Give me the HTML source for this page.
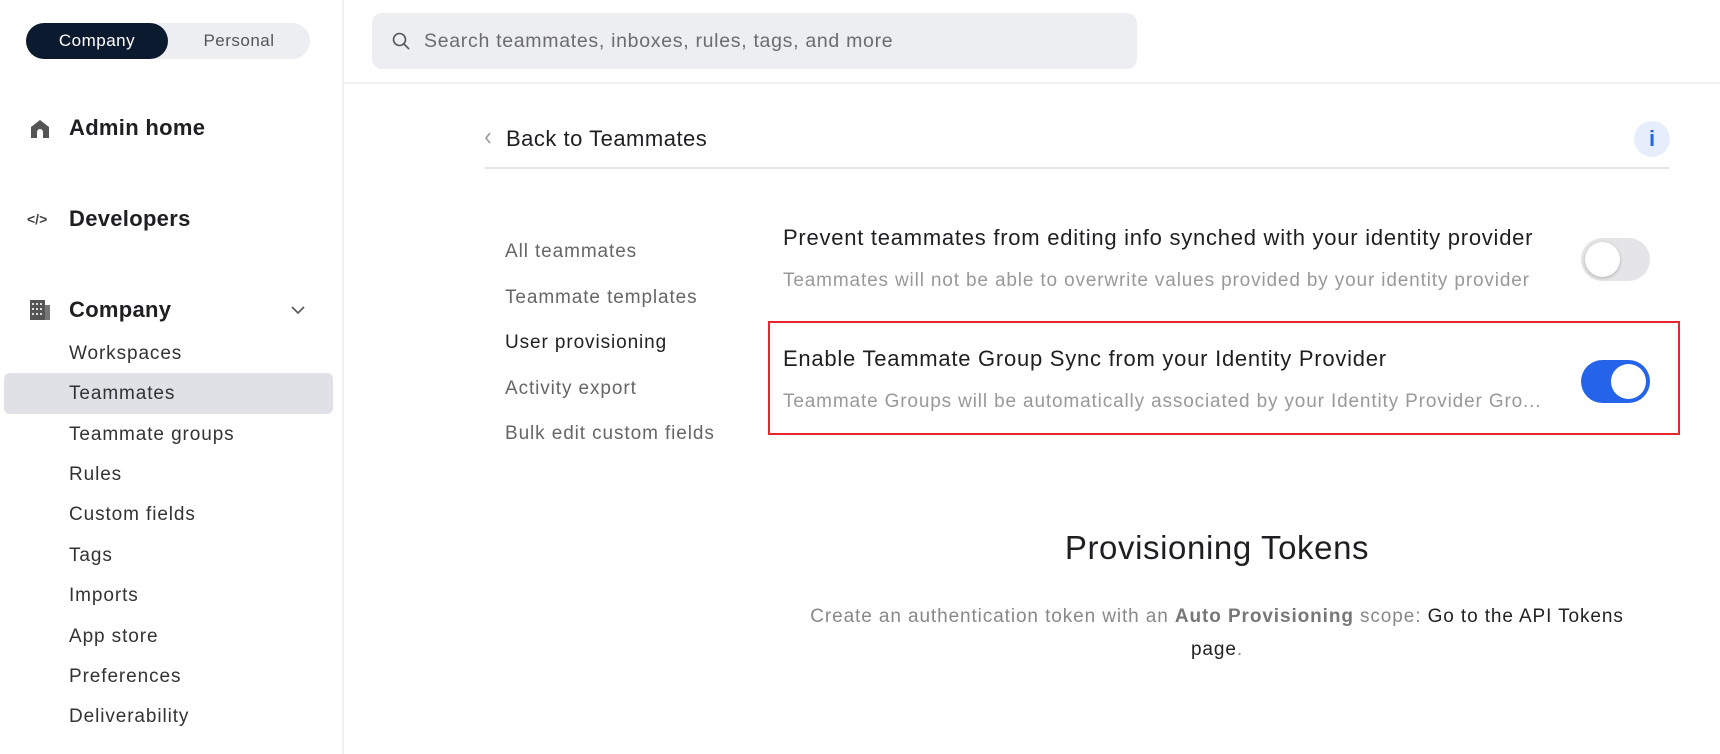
<!DOCTYPE html>
<html><head><meta charset="utf-8"><style>
*{margin:0;padding:0;box-sizing:border-box}
body{width:1720px;height:754px;background:#fff;font-family:"Liberation Sans",Arial,sans-serif;position:relative;overflow:hidden;color:#1f1f23}
.a{position:absolute;white-space:nowrap}
.c{line-height:30px;height:30px;margin-top:-15px}
</style></head><body>
<div class="a" style="left:342px;top:0;width:2px;height:754px;background:#eff0f3"></div>
<div class="a" style="left:344px;top:82px;width:1376px;height:2px;background:#eff0f3"></div>
<!-- switch -->
<div class="a" style="left:26px;top:23px;width:284px;height:36px;border-radius:18px;background:#eceef2"></div>
<div class="a" style="left:26px;top:23px;width:142px;height:36px;border-radius:18px;background:#0c1a30;color:#fff;font-size:17px;text-align:center;line-height:36px;letter-spacing:0.5px">Company</div>
<div class="a" style="left:168px;top:23px;width:142px;height:36px;color:#555;font-size:17px;text-align:center;line-height:36px;letter-spacing:0.5px">Personal</div>
<!-- search -->
<div class="a" style="left:372px;top:13px;width:765px;height:56px;border-radius:10px;background:#eceef2"></div>
<svg class="a" style="left:391px;top:31px" width="20" height="20" viewBox="0 0 20 20"><circle cx="8.5" cy="8.5" r="6" fill="none" stroke="#555" stroke-width="1.6"/><path d="M13 13l5 5" stroke="#555" stroke-width="1.6"/></svg>
<div class="a c" style="left:424px;top:41px;font-size:19.5px;color:#6b6b70;letter-spacing:0.7px">Search teammates, inboxes, rules, tags, and more</div>
<!-- sidebar -->
<svg class="a" style="left:29px;top:118px" width="22" height="22" viewBox="0 0 22 22"><path d="M2 9L11 2l9 7v11h-6v-6a3 3 0 0 0-6 0v6H2z" fill="#555"/></svg>
<div class="a c" style="left:69px;top:128px;font-size:22px;font-weight:bold;letter-spacing:0.3px">Admin home</div>
<div class="a c" style="left:27px;top:219px;font-size:14px;color:#444;font-weight:bold">&lt;/&gt;</div>
<div class="a c" style="left:69px;top:219px;font-size:22px;font-weight:bold;letter-spacing:0.3px">Developers</div>
<svg class="a" style="left:29px;top:299px" width="22" height="22" viewBox="0 0 22 22"><rect x="1" y="1" width="15" height="20" fill="#555"/><rect x="16" y="6" width="5" height="15" fill="#777"/><g fill="#ddd"><rect x="3" y="4" width="2" height="2"/><rect x="7" y="4" width="2" height="2"/><rect x="11" y="4" width="2" height="2"/><rect x="3" y="9" width="2" height="2"/><rect x="7" y="9" width="2" height="2"/><rect x="11" y="9" width="2" height="2"/><rect x="3" y="14" width="2" height="2"/><rect x="7" y="14" width="2" height="2"/><rect x="11" y="14" width="2" height="2"/></g></svg>
<div class="a c" style="left:69px;top:310px;font-size:22px;font-weight:bold;letter-spacing:0.3px">Company</div>
<svg class="a" style="left:290px;top:304px" width="16" height="12" viewBox="0 0 16 12"><path d="M2 3l6 6 6-6" fill="none" stroke="#555" stroke-width="1.6"/></svg>
<div class="a" style="left:4px;top:373px;width:329px;height:41px;border-radius:6px;background:#dfe1e7"></div>
<div style="font-size:19px;color:#333;letter-spacing:0.9px">
<div class="a c" style="left:69px;top:354px">Workspaces</div>
<div class="a c" style="left:69px;top:394px">Teammates</div>
<div class="a c" style="left:69px;top:435px">Teammate groups</div>
<div class="a c" style="left:69px;top:475px">Rules</div>
<div class="a c" style="left:69px;top:515px">Custom fields</div>
<div class="a c" style="left:69px;top:556px">Tags</div>
<div class="a c" style="left:69px;top:596px">Imports</div>
<div class="a c" style="left:69px;top:637px">App store</div>
<div class="a c" style="left:69px;top:677px">Preferences</div>
<div class="a c" style="left:69px;top:717px">Deliverability</div>
</div>
<!-- main -->
<svg class="a" style="left:483px;top:131px" width="10" height="14" viewBox="0 0 10 14"><path d="M7 2L3 7l4 5" fill="none" stroke="#999" stroke-width="1.6"/></svg>
<div class="a c" style="left:506px;top:139px;font-size:22px;letter-spacing:0.5px">Back to Teammates</div>
<div class="a" style="left:1634px;top:121px;width:36px;height:36px;border-radius:50%;background:#e6eefb;color:#2563eb;font-size:22px;text-align:center;line-height:36px;font-weight:bold">i</div>
<div class="a" style="left:485px;top:167px;width:1184px;height:2px;background:#e4e4e7"></div>
<div style="font-size:19px;color:#666;letter-spacing:0.9px">
<div class="a c" style="left:505px;top:252px">All teammates</div>
<div class="a c" style="left:505px;top:298px">Teammate templates</div>
<div class="a c" style="left:505px;top:343px;color:#222">User provisioning</div>
<div class="a c" style="left:505px;top:389px">Activity export</div>
<div class="a c" style="left:505px;top:434px">Bulk edit custom fields</div>
</div>
<div class="a c" style="left:783px;top:238px;font-size:22px;letter-spacing:0.75px">Prevent teammates from editing info synched with your identity provider</div>
<div class="a c" style="left:783px;top:281px;font-size:19px;color:#999;letter-spacing:0.85px">Teammates will not be able to overwrite values provided by your identity provider</div>
<div class="a" style="left:1581px;top:238px;width:69px;height:43px;border-radius:22px;background:#e5e5e7"></div>
<div class="a" style="left:1585px;top:242px;width:35px;height:35px;border-radius:50%;background:#fff;box-shadow:0 1px 3px rgba(0,0,0,.25)"></div>
<div class="a" style="left:768px;top:321px;width:912px;height:114px;border:2px solid #e8262b"></div>
<div class="a c" style="left:783px;top:359px;font-size:22px;letter-spacing:0.75px">Enable Teammate Group Sync from your Identity Provider</div>
<div class="a c" style="left:783px;top:402px;font-size:19px;color:#999;letter-spacing:0.85px">Teammate Groups will be automatically associated by your Identity Provider Gro...</div>
<div class="a" style="left:1581px;top:360px;width:69px;height:43px;border-radius:22px;background:#2563eb"></div>
<div class="a" style="left:1611px;top:364px;width:35px;height:35px;border-radius:50%;background:#fff"></div>
<div class="a" style="left:917px;top:528px;width:600px;text-align:center;font-size:33px;line-height:40px;letter-spacing:0.6px">Provisioning Tokens</div>
<div class="a" style="left:767px;top:600px;width:900px;text-align:center;font-size:19px;line-height:33px;color:#888;letter-spacing:0.9px">Create an authentication token with an <b style="color:#777">Auto Provisioning</b> scope: <span style="color:#222">Go to the API Tokens</span><br><span style="color:#222">page</span>.</div>
</body></html>
